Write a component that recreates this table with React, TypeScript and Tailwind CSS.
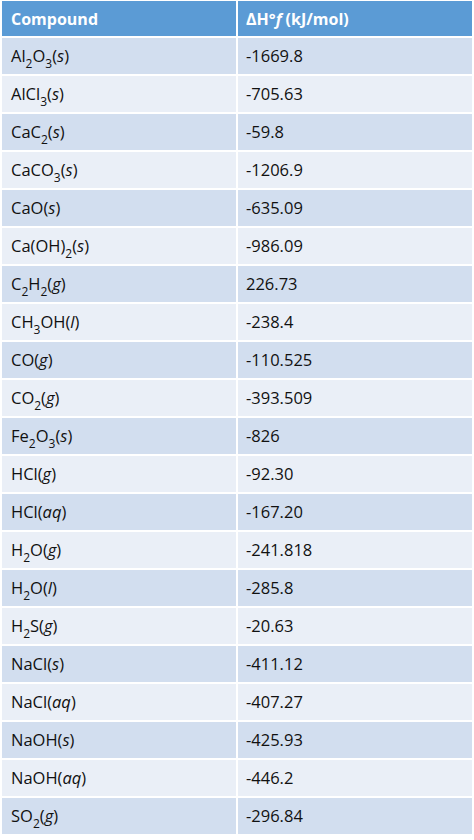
import React from 'react';

type Row = { name: React.ReactNode; value: string };

const Sub = ({ children }: { children: React.ReactNode }) => (
  <sub className="text-[12px] align-[-3px] leading-none">{children}</sub>
);
const St = ({ children }: { children: React.ReactNode }) => <i>{children}</i>;

const rows: Row[] = [
  { name: <>Al<Sub>2</Sub>O<Sub>3</Sub>(<St>s</St>)</>, value: '-1669.8' },
  { name: <>AlCl<Sub>3</Sub>(<St>s</St>)</>, value: '-705.63' },
  { name: <>CaC<Sub>2</Sub>(<St>s</St>)</>, value: '-59.8' },
  { name: <>CaCO<Sub>3</Sub>(<St>s</St>)</>, value: '-1206.9' },
  { name: <>CaO(<St>s</St>)</>, value: '-635.09' },
  { name: <>Ca(OH)<Sub>2</Sub>(<St>s</St>)</>, value: '-986.09' },
  { name: <>C<Sub>2</Sub>H<Sub>2</Sub>(<St>g</St>)</>, value: '226.73' },
  { name: <>CH<Sub>3</Sub>OH(<St>l</St>)</>, value: '-238.4' },
  { name: <>CO(<St>g</St>)</>, value: '-110.525' },
  { name: <>CO<Sub>2</Sub>(<St>g</St>)</>, value: '-393.509' },
  { name: <>Fe<Sub>2</Sub>O<Sub>3</Sub>(<St>s</St>)</>, value: '-826' },
  { name: <>HCl(<St>g</St>)</>, value: '-92.30' },
  { name: <>HCl(<St>aq</St>)</>, value: '-167.20' },
  { name: <>H<Sub>2</Sub>O(<St>g</St>)</>, value: '-241.818' },
  { name: <>H<Sub>2</Sub>O(<St>l</St>)</>, value: '-285.8' },
  { name: <>H<Sub>2</Sub>S(<St>g</St>)</>, value: '-20.63' },
  { name: <>NaCl(<St>s</St>)</>, value: '-411.12' },
  { name: <>NaCl(<St>aq</St>)</>, value: '-407.27' },
  { name: <>NaOH(<St>s</St>)</>, value: '-425.93' },
  { name: <>NaOH(<St>aq</St>)</>, value: '-446.2' },
  { name: <>SO<Sub>2</Sub>(<St>g</St>)</>, value: '-296.84' },
];

export default function App() {
  return (
    <div className="w-[474px] h-[840px] bg-white pl-[2px] pt-[1px] font-['Open_Sans',sans-serif] text-[16.5px] text-[#111]">
      <div className="grid grid-cols-[234px_234px] gap-[2px]">
        {/* header */}
        <div className="h-[35px] bg-[#5b9bd5] flex items-center pl-[9px] text-white font-bold text-[16px]">
          Compound
        </div>
        <div className="h-[35px] bg-[#5b9bd5] flex items-center pl-[8px] text-white font-bold text-[16px]">
          ΔH°<i className="mr-[4px]">f</i>(kJ/mol)
        </div>

        {rows.map((r, i) => {
          const bg = i % 2 === 0 ? 'bg-[#d2deef]' : 'bg-[#eaeff7]';
          return (
            <React.Fragment key={i}>
              <div className={`h-[36px] ${bg} flex items-center pl-[9px]`}>
                <span>{r.name}</span>
              </div>
              <div className={`h-[36px] ${bg} flex items-center pl-[8px]`}>
                {r.value}
              </div>
            </React.Fragment>
          );
        })}
      </div>
    </div>
  );
}
